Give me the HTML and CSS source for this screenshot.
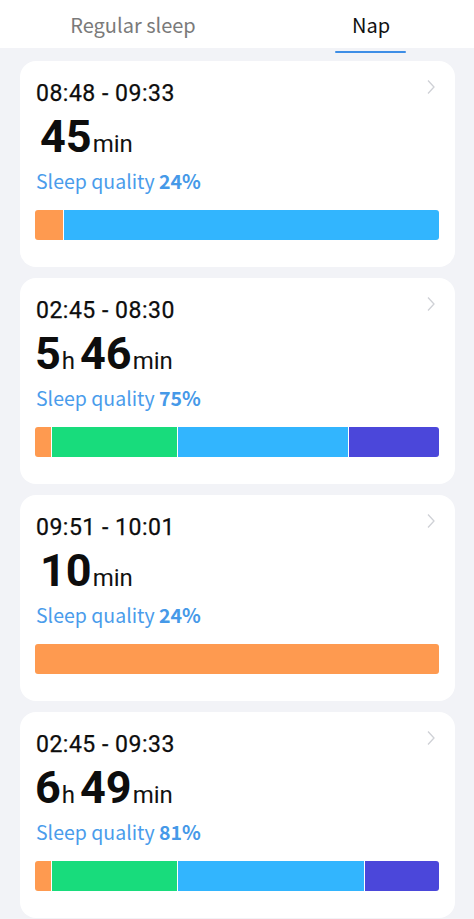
FILE: index.html
```html
<!DOCTYPE html>
<html lang="en">
<head>
<meta charset="utf-8">
<title>Nap records</title>
<link rel="stylesheet" href="styles.css">
</head>
<body>
<header class="tabs">
  <div class="tab">Regular sleep</div>
  <div class="tab tab-active">Nap</div>
</header>
<div class="tab-rail"><span class="tab-indicator"></span></div>

<main class="list">
  <section class="card">
    <div class="card-top">
      <div class="time">08:48 - 09:33</div>
      <svg class="chevron" width="10" height="16" viewBox="0 0 10 16"><path d="M2 1.5 L8 8 L2 14.5" fill="none" stroke="#cfd1d6" stroke-width="1.3"/></svg>
    </div>
    <div class="duration duration-min"><b class="num">45</b><span class="unit">min</span></div>
    <div class="quality">Sleep quality <b>24%</b></div>
    <div class="bar">
      <span class="seg awake" style="width:28px"></span>
      <span class="seg light" style="flex:1"></span>
    </div>
  </section>

  <section class="card">
    <div class="card-top">
      <div class="time">02:45 - 08:30</div>
      <svg class="chevron" width="10" height="16" viewBox="0 0 10 16"><path d="M2 1.5 L8 8 L2 14.5" fill="none" stroke="#cfd1d6" stroke-width="1.3"/></svg>
    </div>
    <div class="duration"><b class="num">5</b><span class="unit">h</span><b class="num">46</b><span class="unit">min</span></div>
    <div class="quality">Sleep quality <b>75%</b></div>
    <div class="bar">
      <span class="seg awake" style="width:16px"></span>
      <span class="seg rem" style="width:125px"></span>
      <span class="seg light" style="width:170px"></span>
      <span class="seg deep" style="flex:1"></span>
    </div>
  </section>

  <section class="card">
    <div class="card-top">
      <div class="time">09:51 - 10:01</div>
      <svg class="chevron" width="10" height="16" viewBox="0 0 10 16"><path d="M2 1.5 L8 8 L2 14.5" fill="none" stroke="#cfd1d6" stroke-width="1.3"/></svg>
    </div>
    <div class="duration duration-min"><b class="num">10</b><span class="unit">min</span></div>
    <div class="quality">Sleep quality <b>24%</b></div>
    <div class="bar">
      <span class="seg awake" style="flex:1"></span>
    </div>
  </section>

  <section class="card">
    <div class="card-top">
      <div class="time">02:45 - 09:33</div>
      <svg class="chevron" width="10" height="16" viewBox="0 0 10 16"><path d="M2 1.5 L8 8 L2 14.5" fill="none" stroke="#cfd1d6" stroke-width="1.3"/></svg>
    </div>
    <div class="duration"><b class="num">6</b><span class="unit">h</span><b class="num">49</b><span class="unit">min</span></div>
    <div class="quality">Sleep quality <b>81%</b></div>
    <div class="bar">
      <span class="seg awake" style="width:16px"></span>
      <span class="seg rem" style="width:125px"></span>
      <span class="seg light" style="width:186px"></span>
      <span class="seg deep" style="flex:1"></span>
    </div>
  </section>
</main>
</body>
</html>
```

FILE: styles.css
```css
* { box-sizing: border-box; }

html, body {
  margin: 0;
  padding: 0;
  height: 100%;
  overflow: hidden;
}

body {
  background: #f2f3f7;
  font-family: "Noto Sans CJK SC", "Noto Sans", sans-serif;
  color: #111;
}

/* top tab switcher */
.tabs {
  background: #fff;
  height: 48px;
  display: grid;
  grid-template-columns: 238px 222px;
  padding-left: 14px;
  align-items: center;
}

.tab {
  text-align: center;
  font-size: 20px;
  color: #7a7a7a;
  line-height: 1;
  padding-top: 2px;
}

.tab-active {
  color: #111;
  padding-left: 16px;
}

.tab-rail {
  height: 13px;
  position: relative;
}

.tab-indicator {
  position: absolute;
  left: 335px;
  top: 3px;
  width: 71px;
  height: 2px;
  border-radius: 1px;
  background: #3e8ee6;
}

/* record list */
.list {
  display: flex;
  flex-direction: column;
  gap: 11px;
  padding: 0 19px 0 20px;
}

.card {
  background: #fff;
  border-radius: 16px;
  height: 206px;
  padding: 18px 16px 0 15px;
}

.card-top {
  display: flex;
  justify-content: space-between;
  align-items: flex-start;
}

.time {
  font-family: Roboto, "Noto Sans", sans-serif;
  font-weight: 400;
  font-size: 23px;
  letter-spacing: 0.5px;
  line-height: 30px;
  padding-left: 1px;
  color: #0d0d0d;
  -webkit-text-stroke: 0.25px #0d0d0d;
}

.chevron {
  margin-top: 0;
  margin-right: 3px;
}

.duration {
  display: flex;
  align-items: baseline;
  height: 54px;
  margin-top: 1px;
}

.duration-min { padding-left: 5px; }

.num {
  font-family: Roboto, "Noto Sans", sans-serif;
  font-weight: 700;
  font-size: 45px;
  line-height: 54px;
  color: #0d0d0d;
}

.unit {
  font-family: Roboto, "Noto Sans", sans-serif;
  font-size: 24px;
  color: #111;
  margin-left: 1px;
  margin-right: 5px;
}

.quality {
  font-size: 19.5px;
  color: #4a9ceb;
  line-height: 28px;
  margin-top: 3px;
  padding-left: 1px;
}

.quality b {
  font-weight: 700;
  color: #4699e8;
}

.bar {
  display: flex;
  gap: 1px;
  height: 30px;
  margin-top: 15px;
  border-radius: 3px;
  overflow: hidden;
}

.seg { display: block; height: 100%; }
.awake { background: #fe9a50; }
.rem { background: #18dc7c; }
.light { background: #32b5fe; }
.deep { background: #4b47da; }
```
